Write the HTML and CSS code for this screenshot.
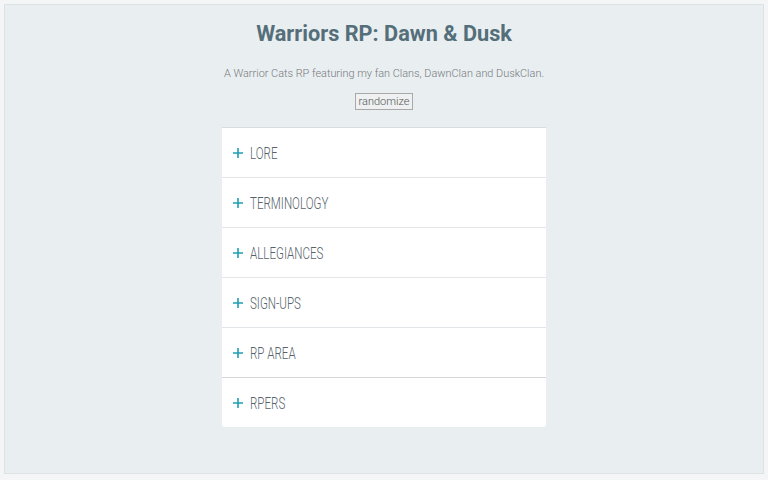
FILE: index.html
```html
<!DOCTYPE html>
<html lang="en">
<head>
    <meta charset="UTF-8">
    <meta name="viewport" content="width=device-width, initial-scale=1.0">
    <title>Warriors RP: Dawn &amp; Dusk</title>
    <link rel="stylesheet" href="styles.css">
</head>
<body>

    <div class="page">
        <h1>Warriors RP: Dawn &amp; Dusk</h1>
        <p class="intro">A Warrior Cats RP featuring my fan Clans, DawnClan and DuskClan.</p>
        <button class="randomize">randomize</button>

        <div class="sections">
            <div class="section"><svg class="plus" viewBox="0 0 10 10"><path d="M5 0V10M0 5H10"/></svg><span class="label">LORE</span></div>
            <div class="section"><svg class="plus" viewBox="0 0 10 10"><path d="M5 0V10M0 5H10"/></svg><span class="label">TERMINOLOGY</span></div>
            <div class="section"><svg class="plus" viewBox="0 0 10 10"><path d="M5 0V10M0 5H10"/></svg><span class="label">ALLEGIANCES</span></div>
            <div class="section"><svg class="plus" viewBox="0 0 10 10"><path d="M5 0V10M0 5H10"/></svg><span class="label">SIGN-UPS</span></div>
            <div class="section"><svg class="plus" viewBox="0 0 10 10"><path d="M5 0V10M0 5H10"/></svg><span class="label">RP AREA</span></div>
            <div class="section"><svg class="plus" viewBox="0 0 10 10"><path d="M5 0V10M0 5H10"/></svg><span class="label">RPERS</span></div>
        </div>
    </div>

</body>
</html>
```

FILE: styles.css
```css
body {
    margin: 0;
    padding: 4px;
    background-color: #f4f5f6;
    font-family: Roboto, "Liberation Sans", sans-serif;
}
.page {
    height: 470px;
    box-sizing: border-box;
    border: 1px solid #dde2e5;
    background-color: #e9eef1;
    text-align: center;
    padding-top: 16px;
}
h1 {
    margin: 0;
    font-size: 21.7px;
    font-weight: 700;
    line-height: 26px;
    color: #546e7a;
}
.intro {
    margin: 20px 0 0;
    font-size: 10.9px;
    font-weight: 300;
    line-height: 14px;
    color: #767a7d;
}
.randomize {
    margin-top: 12px;
    padding: 1px 3px;
    font-family: Roboto, "Liberation Sans", sans-serif;
    font-size: 11px;
    font-weight: 300;
    line-height: 13px;
    color: #555;
    background-color: #eef0f1;
    border: 1px solid #a9a9a9;
    border-radius: 0;
}
.sections {
    width: 324px;
    margin: 17px auto 0;
    background: white;
    border-top: 1px solid #d8dcdf;
    border-radius: 0 0 3px 3px;
    text-align: left;
}
.section {
    display: flex;
    align-items: center;
    height: 49px;
    padding-left: 11px;
    border-bottom: 1px solid #e3e6e8;
    font-family: Roboto, "Liberation Sans", sans-serif;
    font-weight: 300;
    font-size: 17px;
    color: #56636b;
}
.section:nth-child(5) {
    border-bottom-color: #d3d7da;
}
.section:last-child {
    border-bottom: none;
}
/* condensed look, no condensed font installed */
.label {
    display: inline-block;
    transform: scaleX(0.68);
    transform-origin: left center;
}
.plus {
    width: 10px;
    height: 10px;
    margin-right: 7px;
    stroke: #1f9fb3;
    stroke-width: 1.6;
}
```
